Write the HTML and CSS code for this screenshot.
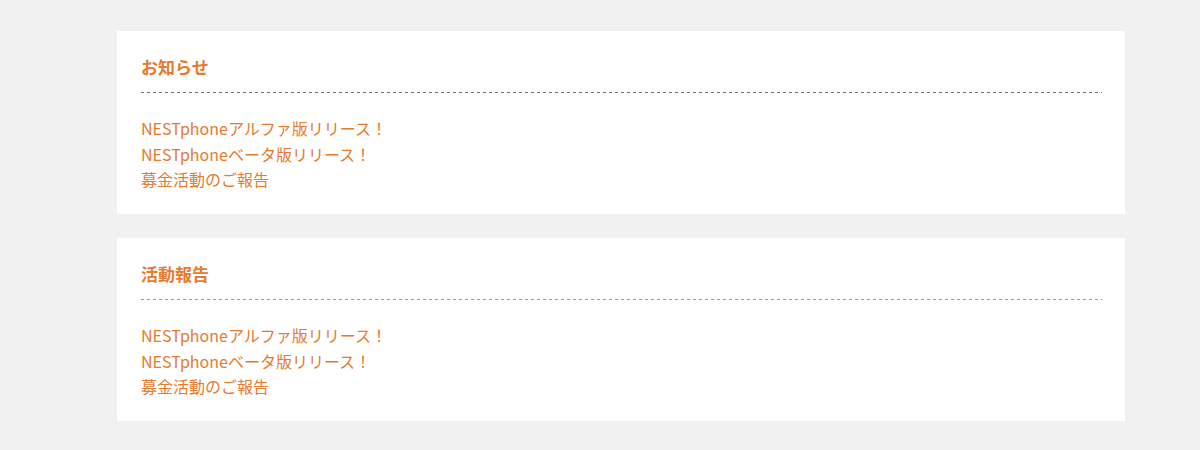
FILE: index.html
```html
<!DOCTYPE html>
<html lang="ja">

<head>
    <meta charset="UTF-8">
    <meta name="viewport" content="width=device-width, initial-scale=1.0">
    <title>NESTphone</title>
    <link rel="stylesheet" href="styles.css">
</head>

<body>
    <div id="main">
        <section class="box">
            <h2 class="box-title">お知らせ</h2>
            <ul class="box-list">
                <li><a href="#">NESTphoneアルファ版リリース！</a></li>
                <li><a href="#">NESTphoneベータ版リリース！</a></li>
                <li><a href="#">募金活動のご報告</a></li>
            </ul>
        </section>
        <section class="box">
            <h2 class="box-title title-orange">活動報告</h2>
            <ul class="box-list">
                <li><a href="#">NESTphoneアルファ版リリース！</a></li>
                <li><a href="#">NESTphoneベータ版リリース！</a></li>
                <li><a href="#">募金活動のご報告</a></li>
            </ul>
        </section>
    </div>
</body>

</html>
```
FILE: styles.css
```css
* {
    padding: 0;
    margin: 0;
}

li {
    list-style: none;
}

a {
    text-decoration: none;
}

body {
    background: #f1f1f1;
    font-family: "Noto Sans CJK JP", "Noto Sans", sans-serif;
    color: #e67a2e;
}

#main {
    display: flex;
    flex-direction: column;
    gap: 24px;
    width: 1008px;
    padding: 31px 0 0 117px;
}

.box {
    background: #fff;
    height: 183px;
    padding: 23px 23px 0 24px;
    box-sizing: border-box;
}

/* dashed rule under the title: 3px dash, 3px gap */
.box-title {
    font-size: 17px;
    font-weight: bold;
    line-height: 25px;
    padding-bottom: 14px;
    background: linear-gradient(to right, #6e7289 50%, transparent 50%) left bottom / 6px 1px repeat-x;
}

.title-orange {
    background-image: linear-gradient(to right, #ea8440 50%, transparent 50%);
}

.box-list {
    padding-top: 23px;
}

.box-list li {
    font-size: 16px;
    line-height: 25.6px;
}

.box-list a {
    color: #e67a2e;
}
```
